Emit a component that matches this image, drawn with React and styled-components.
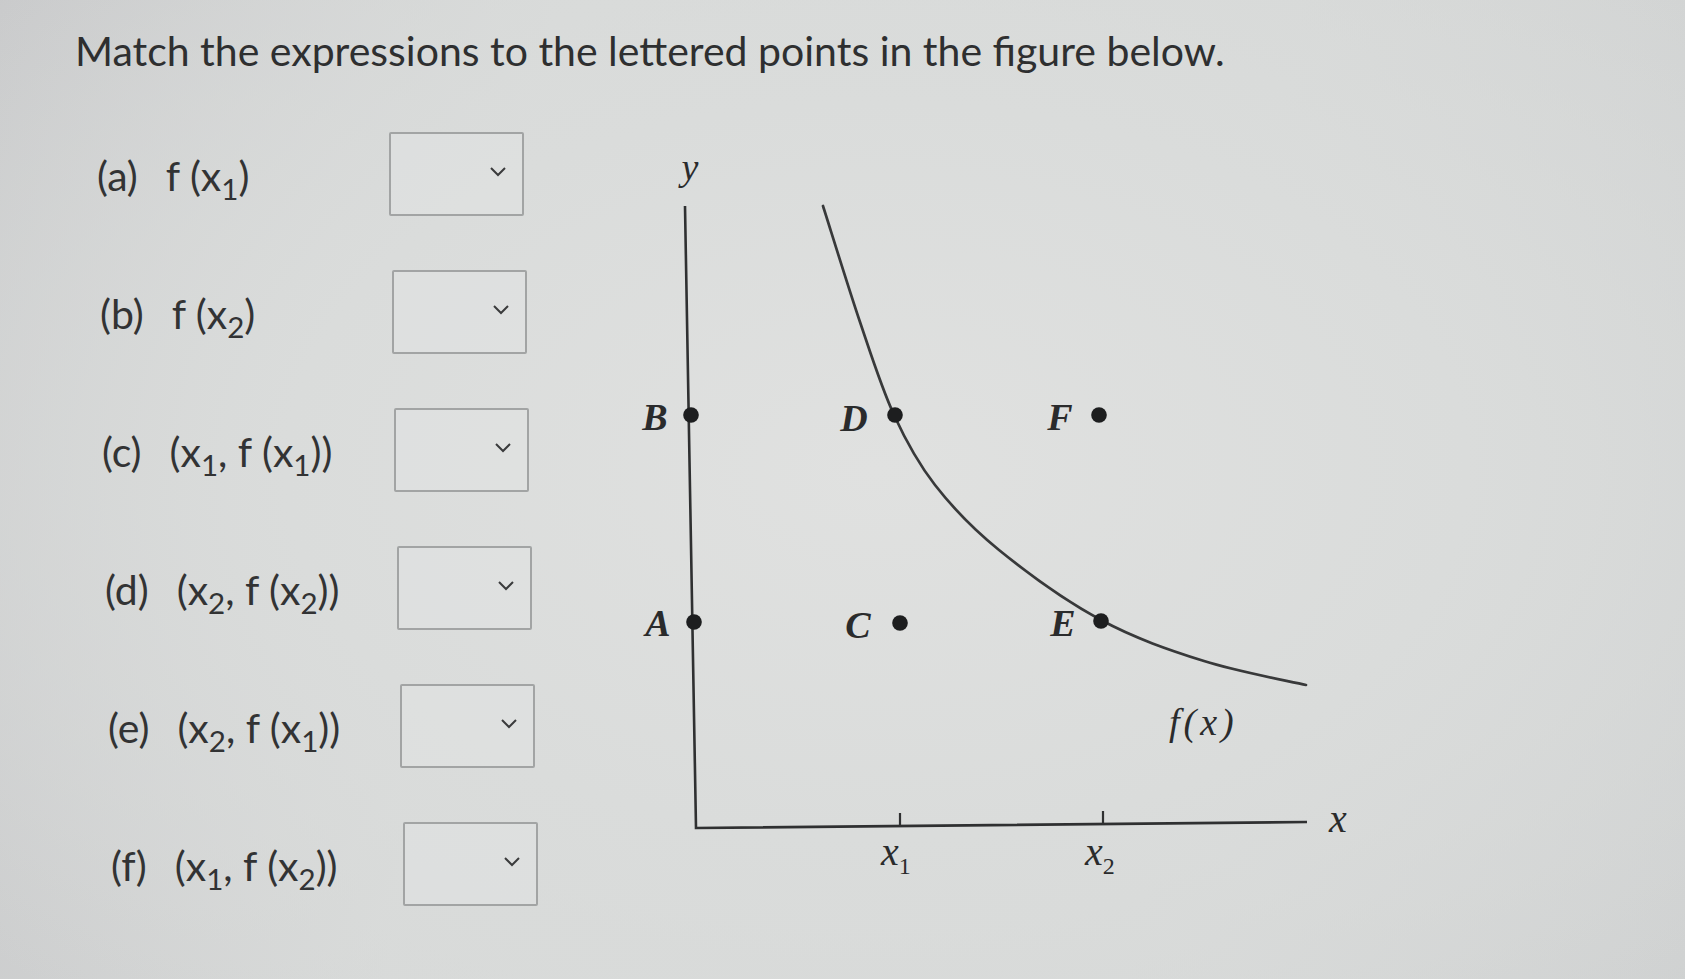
import React from "react";
import styled, { createGlobalStyle } from "styled-components";

const GlobalStyle = createGlobalStyle`
  html, body {
    margin: 0;
    padding: 0;
  }
  body {
    background: #d6d8d7;
    font-family: Lato, "Open Sans", sans-serif;
  }
`;

const Page = styled.div`
  min-height: 100vh;
  box-sizing: border-box;
  padding: 28px 0 0 75px;
  background:
    radial-gradient(ellipse 70% 75% at 52% 48%, #e0e1e0 0%, #dadcdb 50%, rgba(218, 220, 219, 0) 100%),
    linear-gradient(100deg, #c9cacb 0%, #d7d9d8 30%, #d6d8d7 70%, #cfd1d1 100%);
  color: #343536;
`;

const Title = styled.h1`
  margin: 0;
  font-family: Lato, sans-serif;
  font-weight: 400;
  font-size: 41px;
  line-height: 46px;
  color: #2e2f30;
  white-space: nowrap;
`;

const Body = styled.div`
  display: flex;
  align-items: flex-start;
  margin-top: 58px;
`;

const QuestionList = styled.ol`
  list-style: none;
  box-sizing: border-box;
  margin: 0;
  padding: 0 0 0 22px;
  width: 470px;
  display: flex;
  flex-direction: column;
  gap: 54px;
`;

const Row = styled.li`
  display: grid;
  grid-template-columns: 292px 135px;
  align-items: center;
  height: 84px;
  padding-left: ${(p) => p.$shift}px;
`;

const Label = styled.div`
  display: flex;
  align-items: baseline;
  gap: 28px;
  font-size: 41px;
  line-height: 1;
  color: #323334;
  margin-top: 2px;
  white-space: nowrap;
`;

const Tag = styled.span`
  display: inline-block;
`;

const Expr = styled.span`
  display: inline-block;
`;

const Sub = styled.sub`
  font-size: 0.72em;
  vertical-align: -0.3em;
  line-height: 0;
`;

const Select = styled.button`
  box-sizing: border-box;
  width: 135px;
  height: 84px;
  border: 2px solid #a2a4a4;
  border-radius: 2px;
  background: rgba(226, 228, 227, 0.5);
  display: flex;
  align-items: center;
  justify-content: flex-end;
  padding: 0 16px 6px 0;
  cursor: pointer;
`;

const Chevron = styled.svg`
  width: 16px;
  height: 9px;
  overflow: visible;
`;

const Figure = styled.svg`
  flex: none;
  margin: 18px 0 0 85px;
  width: 730px;
  height: 740px;
  overflow: visible;
`;

const Letter = styled.text`
  font-family: "Liberation Serif", "Times New Roman", serif;
  font-style: italic;
  font-weight: ${(p) => (p.$bold ? 700 : 400)};
  font-size: ${(p) => p.$size || 38}px;
  letter-spacing: ${(p) => p.$track || 0}px;
  fill: #2a2b2c;
`;

const SubIndex = styled.tspan`
  font-style: normal;
  font-size: 24px;
`;

const items = [
  { tag: "(a)", expr: <>f (x<Sub>1</Sub>)</> },
  { tag: "(b)", expr: <>f (x<Sub>2</Sub>)</> },
  { tag: "(c)", expr: <>(x<Sub>1</Sub>, f (x<Sub>1</Sub>))</> },
  { tag: "(d)", expr: <>(x<Sub>2</Sub>, f (x<Sub>2</Sub>))</> },
  { tag: "(e)", expr: <>(x<Sub>2</Sub>, f (x<Sub>1</Sub>))</> },
  { tag: "(f)", expr: <>(x<Sub>1</Sub>, f (x<Sub>2</Sub>))</> },
];

// points of the decreasing curve f(x), in figure coordinates
const curve = [
  [823, 206],
  [860, 322],
  [894, 415],
  [935, 485],
  [999, 550],
  [1101, 620],
  [1204, 661],
  [1306, 685],
];

// smooth Catmull-Rom path through the curve points
function smoothPath(pts) {
  let d = `M ${pts[0][0]} ${pts[0][1]}`;
  for (let i = 0; i < pts.length - 1; i++) {
    const p0 = pts[i - 1] || pts[i];
    const p1 = pts[i];
    const p2 = pts[i + 1];
    const p3 = pts[i + 2] || p2;
    const c1 = [p1[0] + (p2[0] - p0[0]) / 6, p1[1] + (p2[1] - p0[1]) / 6];
    const c2 = [p2[0] - (p3[0] - p1[0]) / 6, p2[1] - (p3[1] - p1[1]) / 6];
    d += ` C ${c1[0].toFixed(1)} ${c1[1].toFixed(1)}, ${c2[0].toFixed(1)} ${c2[1].toFixed(1)}, ${p2[0]} ${p2[1]}`;
  }
  return d;
}

const points = [
  { name: "B", dot: [691, 415], label: [655, 430] },
  { name: "D", dot: [895, 415], label: [854, 431] },
  { name: "F", dot: [1099, 415], label: [1060, 430] },
  { name: "A", dot: [694, 622], label: [658, 636] },
  { name: "C", dot: [900, 623], label: [858, 638] },
  { name: "E", dot: [1101, 621], label: [1063, 636] },
];

function Graph() {
  return (
    <Figure viewBox="630 150 730 740">
      {/* axes */}
      <polyline
        points="685,206 696,828 1307,822"
        fill="none"
        stroke="#2f3031"
        strokeWidth="2.6"
        strokeLinejoin="miter"
      />
      {/* ticks */}
      <line x1="900" y1="813" x2="900" y2="827" stroke="#2f3031" strokeWidth="2.2" />
      <line x1="1103" y1="811" x2="1103" y2="825" stroke="#2f3031" strokeWidth="2.2" />
      {/* f(x) */}
      <path d={smoothPath(curve)} fill="none" stroke="#38393a" strokeWidth="2.7" strokeLinecap="round" />

      {points.map((p) => (
        <g key={p.name}>
          <circle cx={p.dot[0]} cy={p.dot[1]} r="7.8" fill="#1d1e1f" />
          <Letter $bold x={p.label[0]} y={p.label[1]} textAnchor="middle">
            {p.name}
          </Letter>
        </g>
      ))}

      <Letter x="690" y="180" textAnchor="middle">y</Letter>
      <Letter x="1338" y="832" textAnchor="middle" $size={40}>x</Letter>
      <Letter x="881" y="865" $size={40}>
        x<SubIndex dy="9">1</SubIndex>
      </Letter>
      <Letter x="1085" y="865" $size={40}>
        x<SubIndex dy="9">2</SubIndex>
      </Letter>
      <Letter x="1169" y="735" $size={38} $track={4}>f(x)</Letter>
    </Figure>
  );
}

export default function App() {
  return (
    <>
      <GlobalStyle />
      <Page>
        <Title>Match the expressions to the lettered points in the figure below.</Title>
        <Body>
          <QuestionList>
            {items.map((it, i) => (
              <Row key={it.tag} $shift={Math.round(i * 2.7)}>
                <Label>
                  <Tag>{it.tag}</Tag>
                  <Expr>{it.expr}</Expr>
                </Label>
                <Select type="button" aria-label={`answer ${it.tag}`}>
                  <Chevron viewBox="0 0 16 9">
                    <polyline points="1,1 8,8 15,1" fill="none" stroke="#3a3b3c" strokeWidth="2" />
                  </Chevron>
                </Select>
              </Row>
            ))}
          </QuestionList>
          <Graph />
        </Body>
      </Page>
    </>
  );
}
